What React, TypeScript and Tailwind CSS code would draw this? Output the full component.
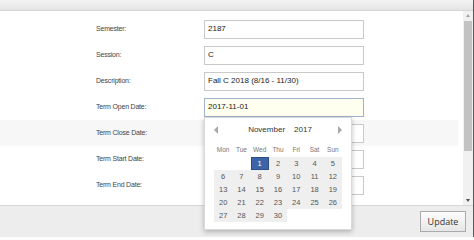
import { useState } from 'react'

const fields = [
  { label: 'Semester:', value: '2187' },
  { label: 'Session:', value: 'C' },
  { label: 'Description:', value: 'Fall C 2018 (8/16 - 11/30)' },
  { label: 'Term Open Date:', value: '2017-11-01', focused: true },
  { label: 'Term Close Date:', value: '', hover: true },
  { label: 'Term Start Date:', value: '' },
  { label: 'Term End Date:', value: '' },
]

const dayNames = ['Mon', 'Tue', 'Wed', 'Thu', 'Fri', 'Sat', 'Sun']

// november 2017 starts on a wednesday
const cells: (number | null)[] = [null, null, ...Array.from({ length: 30 }, (_, i) => i + 1), null, null, null]

const DatePicker = () => {
  return (
    <div className="absolute left-[204px] top-[117px] w-[148px] border border-[#d9d9d9] bg-white pt-[5px] pb-[7px] shadow-[0_2px_5px_rgba(0,0,0,0.25)]">
      <div className="flex h-[13px] items-center px-[9px] text-[8px] text-[#333]">
        <span className="mt-[1px] h-0 w-0 border-y-[4px] border-r-[4px] border-y-transparent border-r-[#a9a9a9]" />
        <div className="flex flex-1 justify-center gap-[9px] pl-[4px]">
          <span>November</span>
          <span>2017</span>
        </div>
        <span className="mt-[1px] h-0 w-0 border-y-[4px] border-l-[4px] border-y-transparent border-l-[#a9a9a9]" />
      </div>
      <div className="mx-[9px] mt-[7px] grid h-[13px] grid-cols-7 items-center text-center text-[6.5px] text-[#777]">
        {dayNames.map((d) => (
          <span key={d}>{d}</span>
        ))}
      </div>
      <div className="mx-[9px] mt-[1px] grid grid-cols-7 text-center text-[7.5px] text-[#555]">
        {cells.map((c, i) =>
          c === null ? (
            <div key={i} className="h-[13px]" />
          ) : c === 1 ? (
            <div key={i} className="flex h-[13px] items-center justify-center border border-[#2c4f8c] bg-[#3e63a6] text-white">
              {c}
            </div>
          ) : (
            <div key={i} className="flex h-[13px] items-center justify-center bg-[#efefef]">
              {c}
            </div>
          )
        )}
      </div>
    </div>
  )
}

export default function App() {
  const [values] = useState(fields)

  return (
    <div
      className="relative flex h-[237px] w-[474px] flex-col overflow-hidden border-r border-[#5a5a5a] bg-white"
      style={{ fontFamily: '"Liberation Sans", Arial, sans-serif' }}
    >
      <div className="h-[11px] border-b border-[#d5d5d5] bg-gradient-to-b from-[#f3f3f3] to-[#e4e4e4]" />

      <div className="flex min-h-0 flex-1">
        <div className="flex-1 pt-[5px] pr-[5px]">
          {values.map((f) => (
            <div key={f.label} className={`flex h-[26px] items-center ${f.hover ? 'bg-[#f7f7f7]' : ''}`}>
              <label className="w-[204px] shrink-0 pl-[96px] whitespace-nowrap text-[7px] tracking-[-0.2px] text-[#444]">
                {f.label}
              </label>
              <div
                className={`flex h-[19px] w-[160px] items-center border px-[3px] text-[8px] text-[#222] ${
                  f.focused ? 'border-[#9fb3cc] bg-[#fffff0]' : 'border-[#c9c9c9] bg-white'
                }`}
              >
                {f.value}
              </div>
            </div>
          ))}
        </div>

        <div className="flex w-[10px] flex-col items-center bg-[#f1f1f1]">
          <span className="mt-[3px] h-0 w-0 border-x-[2.5px] border-b-[3px] border-x-transparent border-b-[#a3a3a3]" />
          <div className="mt-[4px] h-[130px] w-[8px] bg-[#c2c2c2]" />
          <div className="flex-1" />
          <span className="mb-[3px] h-0 w-0 border-x-[2.5px] border-t-[3px] border-x-transparent border-t-[#505050]" />
        </div>
      </div>

      <div className="flex h-[32px] items-center justify-end border-t border-[#d7d7d7] bg-[#ededed] pr-[7px]">
        <button className="h-[21px] w-[46px] border border-[#ababab] bg-gradient-to-b from-[#fdfdfd] to-[#e6e6e6] text-[9px] text-[#333]" style={{ fontFamily: '"Open Sans", sans-serif' }}>
          Update
        </button>
      </div>

      <DatePicker />
    </div>
  )
}
